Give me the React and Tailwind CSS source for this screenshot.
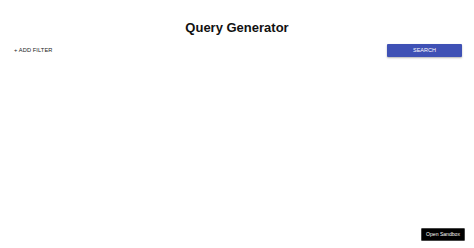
export default function App() {
  return (
    <div className="relative w-[474px] h-[248px] bg-white overflow-hidden" style={{ fontFamily: '"Liberation Sans", Arial, sans-serif' }}>
      <div className="flex flex-col">
        <div className="h-[20px]" />
        <h1 className="text-center text-[13px] leading-[16px] font-bold text-[#111]">Query Generator</h1>
        <div className="flex items-center justify-between pl-[14px] pr-[12px] mt-[8px]">
          <button className="text-[5.7px] leading-[13px] text-[#222] tracking-[0.1px]">+ ADD FILTER</button>
          <button className="w-[75px] h-[13px] bg-[#3f51b5] text-white text-[5.5px] rounded-[1px] shadow-[0_1px_2px_rgba(0,0,0,0.3)]">SEARCH</button>
        </div>
      </div>
      <div className="absolute left-[421px] top-[228px] w-[44px] h-[13px] bg-black rounded-[1px] border border-[#444] flex items-center justify-center text-white text-[5.1px]">Open Sandbox</div>
    </div>
  );
}
